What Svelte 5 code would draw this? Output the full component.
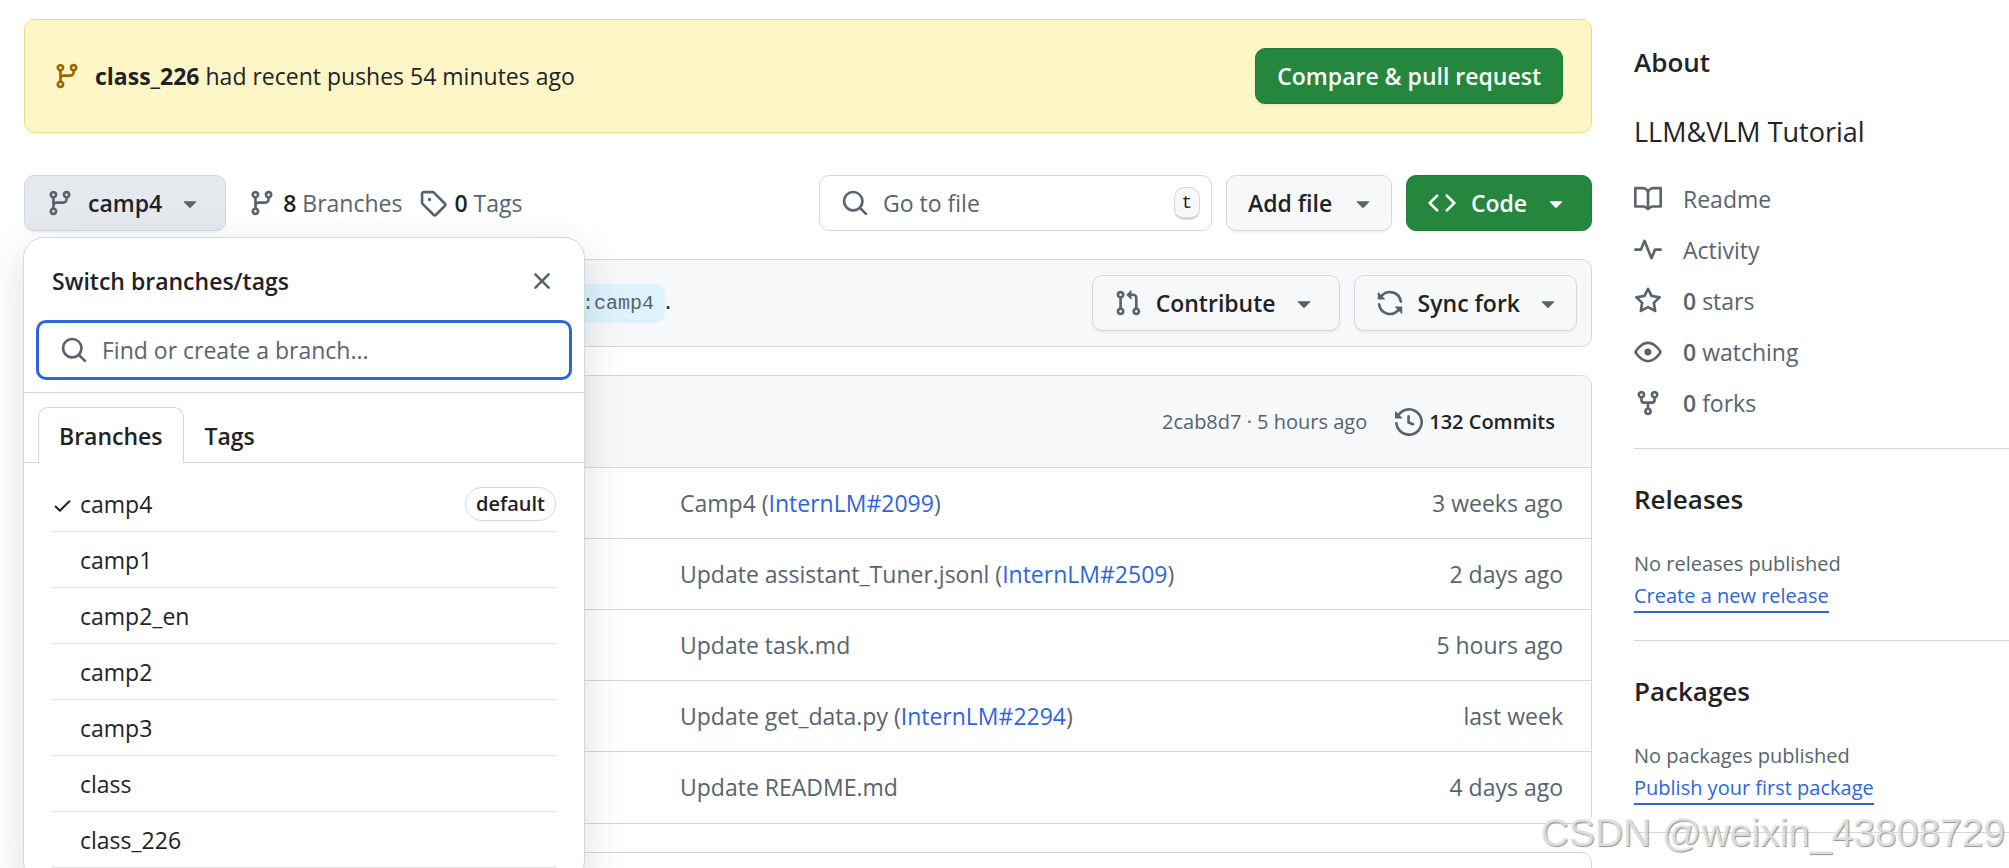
<script lang="ts">
  type Commit = { message: string; pull?: string; time: string };

  const icons = {
    branch:
      'M9.5 3.25a2.25 2.25 0 1 1 3 2.122V6A2.5 2.5 0 0 1 10 8.5H6a1 1 0 0 0-1 1v1.128a2.251 2.251 0 1 1-1.5 0V5.372a2.25 2.25 0 1 1 1.5 0v1.836A2.493 2.493 0 0 1 6 7h4a1 1 0 0 0 1-1v-.628A2.25 2.25 0 0 1 9.5 3.25Zm-6 0a.75.75 0 1 0 1.5 0 .75.75 0 0 0-1.5 0Zm8.25-.75a.75.75 0 1 0 0 1.5.75.75 0 0 0 0-1.5ZM4.25 12a.75.75 0 1 0 0 1.5.75.75 0 0 0 0-1.5Z',
    tag: 'M1 7.775V2.75C1 1.784 1.784 1 2.75 1h5.025c.464 0 .91.184 1.238.513l6.25 6.25a1.75 1.75 0 0 1 0 2.474l-5.026 5.026a1.75 1.75 0 0 1-2.474 0l-6.25-6.25A1.752 1.752 0 0 1 1 7.775Zm1.5 0c0 .066.026.13.073.177l6.25 6.25a.25.25 0 0 0 .354 0l5.025-5.025a.25.25 0 0 0 0-.354l-6.25-6.25a.25.25 0 0 0-.177-.073H2.75a.25.25 0 0 0-.25.25ZM6 5a1 1 0 1 1 0 2 1 1 0 0 1 0-2Z',
    search:
      'M10.68 11.74a6 6 0 0 1-7.922-8.982 6 6 0 0 1 8.982 7.922l3.04 3.04a.749.749 0 0 1-.326 1.275.749.749 0 0 1-.734-.215ZM11.5 7a4.499 4.499 0 1 0-8.997 0A4.499 4.499 0 0 0 11.5 7Z',
    caret: 'm4.427 7.427 3.396 3.396a.25.25 0 0 0 .354 0l3.396-3.396A.25.25 0 0 0 11.396 7H4.604a.25.25 0 0 0-.177.427Z',
    pull: 'M1.5 3.25a2.25 2.25 0 1 1 3 2.122v5.256a2.251 2.251 0 1 1-1.5 0V5.372A2.25 2.25 0 0 1 1.5 3.25Zm5.677-.177L9.573.677A.25.25 0 0 1 10 .854V2.5h1A2.5 2.5 0 0 1 13.5 5v5.628a2.251 2.251 0 1 1-1.5 0V5a1 1 0 0 0-1-1h-1v1.646a.25.25 0 0 1-.427.177L7.177 3.427a.25.25 0 0 1 0-.354ZM3.75 2.5a.75.75 0 1 0 0 1.5.75.75 0 0 0 0-1.5Zm0 9.5a.75.75 0 1 0 0 1.5.75.75 0 0 0 0-1.5Zm8.25.75a.75.75 0 1 0 1.5 0 .75.75 0 0 0-1.5 0Z',
    sync: 'M1.705 8.005a.75.75 0 0 1 .834.656 5.5 5.5 0 0 0 9.592 2.97l-1.204-1.204a.25.25 0 0 1 .177-.427h3.646a.25.25 0 0 1 .25.25v3.646a.25.25 0 0 1-.427.177l-1.38-1.38A7.002 7.002 0 0 1 1.05 8.84a.75.75 0 0 1 .656-.834ZM8 2.5a5.487 5.487 0 0 0-4.131 1.869l1.204 1.204A.25.25 0 0 1 4.896 6H1.25A.25.25 0 0 1 1 5.75V2.104a.25.25 0 0 1 .427-.177l1.38 1.38A7.002 7.002 0 0 1 14.95 7.16a.75.75 0 0 1-1.49.178A5.5 5.5 0 0 0 8 2.5Z',
    history:
      'm.427 1.927 1.215 1.215a8.002 8.002 0 1 1-1.6 5.685.75.75 0 1 1 1.493-.154 6.5 6.5 0 1 0 1.18-4.458l1.358 1.358A.25.25 0 0 1 3.896 6H.25A.25.25 0 0 1 0 5.75V2.104a.25.25 0 0 1 .427-.177ZM7.75 4a.75.75 0 0 1 .75.75v2.992l2.028.812a.75.75 0 0 1-.557 1.392l-2.5-1A.751.751 0 0 1 7 8.25v-3.5A.75.75 0 0 1 7.75 4Z',
    code: 'm11.28 3.22 4.25 4.25a.75.75 0 0 1 0 1.06l-4.25 4.25a.749.749 0 0 1-1.275-.326.749.749 0 0 1 .215-.734L13.94 8l-3.72-3.72a.749.749 0 0 1 .326-1.275.749.749 0 0 1 .734.215Zm-6.56 0a.751.751 0 0 1 1.042.018.751.751 0 0 1 .018 1.042L2.06 8l3.72 3.72a.749.749 0 0 1-.326 1.275.749.749 0 0 1-.734-.215L.47 8.53a.75.75 0 0 1 0-1.06Z',
    close:
      'M3.72 3.72a.75.75 0 0 1 1.06 0L8 6.94l3.22-3.22a.749.749 0 0 1 1.275.326.749.749 0 0 1-.215.734L9.06 8l3.22 3.22a.749.749 0 0 1-.326 1.275.749.749 0 0 1-.734-.215L8 9.06l-3.22 3.22a.751.751 0 0 1-1.042-.018.751.751 0 0 1-.018-1.042L6.94 8 3.72 4.78a.75.75 0 0 1 0-1.06Z',
    check:
      'M13.78 4.22a.75.75 0 0 1 0 1.06l-7.25 7.25a.75.75 0 0 1-1.06 0L2.22 9.28a.751.751 0 0 1 .018-1.042.751.751 0 0 1 1.042-.018L6 10.94l6.72-6.72a.75.75 0 0 1 1.06 0Z',
    book: 'M0 1.75A.75.75 0 0 1 .75 1h4.253c1.227 0 2.317.59 3 1.501A3.743 3.743 0 0 1 11.006 1h4.245a.75.75 0 0 1 .75.75v10.5a.75.75 0 0 1-.75.75h-4.507a2.25 2.25 0 0 0-1.591.659l-.622.621a.75.75 0 0 1-1.06 0l-.622-.621A2.25 2.25 0 0 0 5.258 13H.75a.75.75 0 0 1-.75-.75Zm7.251 10.324.004-5.073-.002-2.253A2.25 2.25 0 0 0 5.003 2.5H1.5v9h3.757a3.75 3.75 0 0 1 1.994.574ZM8.755 4.75l-.004 7.322a3.752 3.752 0 0 1 1.992-.572H14.5v-9h-3.495a2.25 2.25 0 0 0-2.25 2.25Z',
    pulse:
      'M6 2c.306 0 .582.187.696.471L10 10.731l1.304-3.26A.751.751 0 0 1 12 7h3.25a.75.75 0 0 1 0 1.5h-2.742l-1.812 4.528a.751.751 0 0 1-1.392 0L6 4.77 4.696 8.03A.75.75 0 0 1 4 8.5H.75a.75.75 0 0 1 0-1.5h2.742l1.812-4.529A.751.751 0 0 1 6 2Z',
    star: 'M8 .25a.75.75 0 0 1 .673.418l1.882 3.815 4.21.612a.75.75 0 0 1 .416 1.279l-3.046 2.97.719 4.192a.751.751 0 0 1-1.088.791L8 12.347l-3.766 1.98a.75.75 0 0 1-1.088-.79l.72-4.194L.818 6.374a.75.75 0 0 1 .416-1.28l4.21-.611L7.327.668A.75.75 0 0 1 8 .25Zm0 2.445L6.615 5.5a.75.75 0 0 1-.564.41l-3.097.45 2.24 2.184a.75.75 0 0 1 .216.664l-.528 3.084 2.769-1.456a.75.75 0 0 1 .698 0l2.77 1.456-.53-3.084a.75.75 0 0 1 .216-.664l2.24-2.183-3.096-.45a.75.75 0 0 1-.564-.41L8 2.694Z',
    eye: 'M8 2c1.981 0 3.671.992 4.933 2.078 1.27 1.091 2.187 2.345 2.637 3.023a1.62 1.62 0 0 1 0 1.798c-.45.678-1.367 1.932-2.637 3.023C11.67 13.008 9.981 14 8 14c-1.981 0-3.671-.992-4.933-2.078C1.797 10.83.88 9.576.43 8.898a1.62 1.62 0 0 1 0-1.798c.45-.677 1.367-1.931 2.637-3.022C4.33 2.992 6.019 2 8 2ZM1.679 7.932a.12.12 0 0 0 0 .136c.411.622 1.241 1.75 2.366 2.717C5.176 11.758 6.527 12.5 8 12.5c1.473 0 2.825-.742 3.955-1.715 1.124-.967 1.954-2.096 2.366-2.717a.12.12 0 0 0 0-.136c-.412-.621-1.242-1.75-2.366-2.717C10.824 4.242 9.473 3.5 8 3.5c-1.473 0-2.825.742-3.955 1.715-1.124.967-1.954 2.096-2.366 2.717ZM8 10a2 2 0 1 1-.001-3.999A2 2 0 0 1 8 10Z',
    fork: 'M5 5.372v.878c0 .414.336.75.75.75h4.5a.75.75 0 0 0 .75-.75v-.878a2.25 2.25 0 1 1 1.5 0v.878a2.25 2.25 0 0 1-2.25 2.25h-1.5v2.128a2.251 2.251 0 1 1-1.5 0V8.5h-1.5A2.25 2.25 0 0 1 3.5 6.25v-.878a2.25 2.25 0 1 1 1.5 0ZM5 3.25a.75.75 0 1 0-1.5 0 .75.75 0 0 0 1.5 0Zm6.75.75a.75.75 0 1 0 0-1.5.75.75 0 0 0 0 1.5Zm-3 8.75a.75.75 0 1 0-1.5 0 .75.75 0 0 0 1.5 0Z'
  };

  type IconName = keyof typeof icons;

  const branches = ['camp4', 'camp1', 'camp2_en', 'camp2', 'camp3', 'class', 'class_226'];

  const commits: Commit[] = [
    { message: 'Camp4', pull: 'InternLM#2099', time: '3 weeks ago' },
    { message: 'Update assistant_Tuner.jsonl', pull: 'InternLM#2509', time: '2 days ago' },
    { message: 'Update task.md', time: '5 hours ago' },
    { message: 'Update get_data.py', pull: 'InternLM#2294', time: 'last week' },
    { message: 'Update README.md', time: '4 days ago' }
  ];

  const facts: { icon: IconName; count?: number; label: string }[] = [
    { icon: 'book', label: 'Readme' },
    { icon: 'pulse', label: 'Activity' },
    { icon: 'star', count: 0, label: 'stars' },
    { icon: 'eye', count: 0, label: 'watching' },
    { icon: 'fork', count: 0, label: 'forks' }
  ];

  let current = $state('camp4');
  let open = $state(true);
  let tab = $state('Branches');
  let query = $state('');

  const shown = $derived(tab === 'Branches' ? branches.filter((b) => b.includes(query)) : []);
</script>

{#snippet icon(name: IconName)}
  <svg class="icon" class:small={name === 'check'} viewBox="0 0 16 16" aria-hidden="true"><path d={icons[name]} /></svg>
{/snippet}

<div class="page">
  <main>
    <section class="banner">
      {@render icon('branch')}
      <p><strong>class_226</strong> had recent pushes 54 minutes ago</p>
      <button class="btn primary">Compare &amp; pull request</button>
    </section>

    <div class="toolbar">
      <div class="picker">
        <button class="btn pressed" aria-expanded={open} onclick={() => (open = !open)}>
          {@render icon('branch')}
          {current}
          {@render icon('caret')}
        </button>

        {#if open}
          <div class="popover" role="dialog" aria-label="Switch branches/tags">
            <header>
              <h2>Switch branches/tags</h2>
              <button class="close" aria-label="Close" onclick={() => (open = false)}>{@render icon('close')}</button>
            </header>
            <label class="field focused">
              {@render icon('search')}
              <input type="text" placeholder="Find or create a branch..." aria-label="Find or create a branch" bind:value={query} />
            </label>
            <div class="tabs" role="tablist">
              {#each ['Branches', 'Tags'] as name}
                <button role="tab" aria-selected={tab === name} class:active={tab === name} onclick={() => (tab = name)}>{name}</button>
              {/each}
            </div>
            <ul>
              {#each shown as branch}
                <li>
                  <button onclick={() => (current = branch)}>
                    <span class="mark">{#if branch === current}{@render icon('check')}{/if}</span>
                    {branch}
                    {#if branch === 'camp4'}<span class="pill">default</span>{/if}
                  </button>
                </li>
              {/each}
            </ul>
          </div>
        {/if}
      </div>

      <nav>
        <a href="#branches">{@render icon('branch')}<span><b>8</b> Branches</span></a>
        <a href="#tags">{@render icon('tag')}<span><b>0</b> Tags</span></a>
      </nav>

      <label class="field goto">
        {@render icon('search')}
        <input type="text" placeholder="Go to file" aria-label="Go to file" />
        <kbd>t</kbd>
      </label>
      <button class="btn plain add">Add file {@render icon('caret')}</button>
      <button class="btn primary code">{@render icon('code')} Code {@render icon('caret')}</button>
    </div>

    <section class="notice">
      <p><a class="ref" href="#upstream">:camp4</a>.</p>
      <button class="btn">{@render icon('pull')} Contribute {@render icon('caret')}</button>
      <button class="btn plain">{@render icon('sync')} Sync fork {@render icon('caret')}</button>
    </section>

    <section class="files">
      <header>
        <span class="hash">2cab8d7 · 5 hours ago</span>
        <a href="#commits">{@render icon('history')}132 Commits</a>
      </header>
      <table>
        <tbody>
          {#each commits as commit}
            <tr>
              <td class="message">
                {commit.message}
                {#if commit.pull}(<a href="#pull">{commit.pull}</a>){/if}
              </td>
              <td class="time">{commit.time}</td>
            </tr>
          {/each}
        </tbody>
      </table>
    </section>

    <section class="readme"></section>
  </main>

  <aside>
    <section>
      <h2>About</h2>
      <p class="about">LLM&amp;VLM Tutorial</p>
      <ul>
        {#each facts as fact}
          <li>
            <a href="#{fact.label}">
              {@render icon(fact.icon)}
              <span>{#if fact.count !== undefined}<b>{fact.count}</b>{/if} {fact.label}</span>
            </a>
          </li>
        {/each}
      </ul>
    </section>
    <section>
      <h2>Releases</h2>
      <p>No releases published</p>
      <a class="action" href="#release">Create a new release</a>
    </section>
    <section>
      <h2>Packages</h2>
      <p>No packages published</p>
      <a class="action" href="#package">Publish your first package</a>
    </section>
  </aside>

  <div class="watermark">CSDN @weixin_43808729</div>
</div>

<style>
  :global(body) {
    margin: 0;
    background: #fff;
  }

  .page {
    --text: #1f2328;
    --muted: #59636e;
    --line: #d1d9e0;
    --soft: #f6f8fa;
    --blue: #3065d9;
    --green: #25873e;
    position: relative;
    display: grid;
    grid-template-columns: minmax(0, 1fr) 375px;
    column-gap: 42px;
    height: 100vh;
    overflow: hidden;
    box-sizing: border-box;
    padding: 19px 0 0 24px;
    font-family: 'Open Sans', 'Noto Sans', sans-serif;
    font-size: 23px;
    line-height: 32px;
    color: var(--text);
  }

  .page * {
    box-sizing: border-box;
  }

  h2,
  p,
  ul {
    margin: 0;
    padding: 0;
    list-style: none;
  }

  button,
  input {
    font: inherit;
    color: inherit;
  }

  button {
    cursor: pointer;
  }

  a {
    color: var(--blue);
    text-decoration: none;
  }

  b {
    font-weight: 600;
  }

  .icon {
    flex: none;
    width: 28px;
    height: 28px;
    fill: var(--muted);
  }

  .icon.small {
    width: 21px;
    height: 21px;
    fill: var(--text);
  }

  main {
    display: flex;
    flex-direction: column;
  }

  .btn {
    display: flex;
    align-items: center;
    justify-content: space-between;
    gap: 14px;
    height: 56px;
    padding: 0 21px;
    border: 1px solid var(--line);
    border-radius: 10px;
    background: var(--soft);
    box-shadow: 0 2px 2px rgba(31, 35, 40, 0.05);
    font-weight: 600;
    white-space: nowrap;
  }

  .btn.plain {
    padding-right: 14px;
  }

  .btn.add {
    min-width: 166px;
  }

  .btn.code {
    min-width: 186px;
  }

  .btn.pressed {
    background: #e5e9ee;
  }

  .btn.primary {
    border-color: #237a3a;
    background: var(--green);
    color: #fff;
  }

  .btn.primary .icon {
    fill: #fff;
  }

  .banner {
    display: flex;
    align-items: center;
    gap: 14px;
    flex: none;
    padding: 28px;
    border: 1px solid #ecdb8c;
    border-radius: 10px;
    background: #fef6c6;
  }

  .banner .icon {
    fill: #9a6700;
  }

  .banner p {
    flex: 1;
  }

  .toolbar {
    display: flex;
    gap: 14px;
    margin: 42px 0 28px;
  }

  .picker {
    position: relative;
    z-index: 1;
  }

  nav {
    display: flex;
    align-items: center;
    gap: 17px;
    flex: 1;
    padding-left: 8px;
  }

  nav a {
    display: flex;
    align-items: center;
    gap: 7px;
    color: var(--muted);
    white-space: nowrap;
  }

  nav b {
    color: var(--text);
  }

  .field {
    display: flex;
    align-items: center;
    gap: 14px;
    height: 56px;
    padding: 0 11px 0 21px;
    border: 1px solid var(--line);
    border-radius: 10px;
    background: #fff;
  }

  .field input {
    flex: 1;
    min-width: 0;
    padding: 0;
    border: 0;
    outline: 0;
    background: none;
  }

  .field input::placeholder {
    color: var(--muted);
    opacity: 1;
  }

  .field.goto {
    width: 393px;
  }

  .field.focused {
    height: 60px;
    margin: 0 12px 12px;
    border: 3px solid var(--blue);
  }

  kbd {
    width: 26px;
    height: 33px;
    border: 1px solid var(--line);
    border-bottom-width: 3px;
    border-radius: 10px;
    background: var(--soft);
    font: 18px/30px 'Liberation Mono', monospace;
    text-align: center;
  }

  .popover {
    position: absolute;
    top: 62px;
    left: -1px;
    width: 562px;
    border: 1px solid var(--line);
    border-radius: 21px;
    background: #fff;
    box-shadow: 0 14px 42px rgba(37, 41, 46, 0.16);
  }

  .popover header {
    display: flex;
    align-items: center;
    justify-content: space-between;
    height: 82px;
    padding: 4px 28px 0;
  }

  .popover h2 {
    font-size: 23px;
    font-weight: 600;
  }

  .close {
    display: flex;
    padding: 0;
    border: 0;
    background: none;
  }

  .tabs {
    display: flex;
    padding: 14px 14px 0;
    border-top: 1px solid var(--line);
    border-bottom: 1px solid var(--line);
  }

  .tabs button {
    height: 56px;
    margin-bottom: -1px;
    padding: 0 20px;
    border: 1px solid transparent;
    border-bottom: 0;
    border-radius: 10px 10px 0 0;
    background: none;
    font-weight: 600;
  }

  .tabs .active {
    border-color: var(--line);
    background: #fff;
  }

  .popover ul {
    padding: 13px 28px;
  }

  .popover li {
    border-bottom: 1px solid #e0e2e5;
  }

  .popover li button {
    display: flex;
    align-items: center;
    width: 100%;
    height: 55px;
    padding: 0;
    border: 0;
    background: none;
  }

  .mark {
    display: flex;
    width: 28px;
    padding-top: 4px;
  }

  .pill {
    margin-left: auto;
    padding: 0 10px;
    border: 1px solid var(--line);
    border-radius: 18px;
    font-size: 20px;
    font-weight: 600;
  }

  .notice {
    display: flex;
    align-items: center;
    gap: 14px;
    flex: none;
    padding: 15px 14px;
    border: 1px solid var(--line);
    border-radius: 10px;
    background: var(--soft);
  }

  .notice p {
    flex: 1;
    padding-left: 532px;
  }

  .ref {
    display: inline-block;
    padding: 0 11px;
    height: 39px;
    border-radius: 10px;
    background: #ddf4ff;
    color: var(--muted);
    font: 20px/39px 'Liberation Mono', monospace;
  }

  .files {
    margin: 28px 0;
    border: 1px solid var(--line);
    border-radius: 10px;
    overflow: hidden;
    flex: none;
  }

  .files header {
    display: flex;
    align-items: center;
    justify-content: flex-end;
    gap: 28px;
    height: 91px;
    padding-right: 36px;
    background: var(--soft);
    font-size: 20px;
    color: var(--muted);
  }

  .files header a {
    display: flex;
    align-items: center;
    gap: 6px;
    font-weight: 600;
    color: var(--text);
  }

  table {
    width: 100%;
    border-collapse: collapse;
    color: var(--muted);
  }

  td {
    height: 71px;
    padding: 0;
    border-top: 1px solid var(--line);
  }

  .message {
    padding-left: 655px;
  }

  .time {
    padding-right: 28px;
    text-align: right;
  }

  .readme {
    flex: none;
    height: 84px;
    border: 1px solid var(--line);
    border-radius: 10px;
  }

  aside section {
    padding: 29px 0 27px;
    border-bottom: 1px solid var(--line);
    font-size: 20px;
    color: var(--muted);
  }

  aside section:first-child {
    padding: 22px 0 10px;
  }

  aside h2 {
    margin-bottom: 28px;
    font-size: 26px;
    line-height: 42px;
    font-weight: 600;
    color: var(--text);
  }

  .about {
    margin-bottom: 30px;
    font-size: 27px;
    line-height: 42px;
    color: var(--text);
  }

  aside li {
    height: 51px;
    font-size: 23px;
  }

  aside li a {
    display: flex;
    align-items: center;
    gap: 21px;
    color: var(--muted);
  }

  .action {
    display: inline-block;
    line-height: 30px;
    border-bottom: 2px solid var(--blue);
  }

  .watermark {
    position: absolute;
    right: 4px;
    bottom: 12px;
    font: 39px/46px 'Liberation Sans', sans-serif;
    color: rgba(232, 232, 232, 0.85);
    text-shadow: 1px 1px 1px rgba(120, 120, 120, 0.8);
  }
</style>
